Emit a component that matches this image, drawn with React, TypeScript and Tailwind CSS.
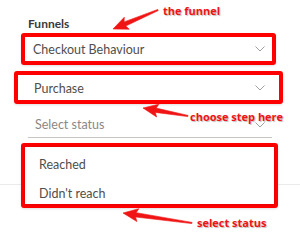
import React from 'react';

type Pt = [number, number];

// tapered annotation arrow: thin at the tail, arrowhead at the tip
function arrowPoints(tail: Pt, tip: Pt, head = 13, wing = 6.5, shaft = 2.2) {
  const dx = tip[0] - tail[0];
  const dy = tip[1] - tail[1];
  const len = Math.hypot(dx, dy);
  const ux = dx / len;
  const uy = dy / len;
  const nx = -uy;
  const ny = ux;
  const bx = tip[0] - ux * head;
  const by = tip[1] - uy * head;
  const pts: Pt[] = [
    [tail[0] + nx * 0.6, tail[1] + ny * 0.6],
    [bx + nx * shaft, by + ny * shaft],
    [bx - ux * 2 + nx * wing, by - uy * 2 + ny * wing],
    tip,
    [bx - ux * 2 - nx * wing, by - uy * 2 - ny * wing],
    [bx - nx * shaft, by - ny * shaft],
    [tail[0] - nx * 0.6, tail[1] - ny * 0.6],
  ];
  return pts.map((p) => `${p[0].toFixed(1)},${p[1].toFixed(1)}`).join(' ');
}

function Chevron() {
  return (
    <svg width="10" height="6" viewBox="0 0 10 6" className="shrink-0">
      <path d="M0.5 0.5L5 5L9.5 0.5" fill="none" stroke="#a19f9d" strokeWidth="1" />
    </svg>
  );
}

const note =
  "absolute whitespace-nowrap font-['Open_Sans',sans-serif] text-[11px] font-bold leading-[14px] text-[#f01414] [text-shadow:1px_1px_1px_rgba(0,0,0,0.25)]";

export default function App() {
  return (
    <div className="relative h-[232px] w-[300px] overflow-hidden bg-white font-['Lato','Open_Sans',sans-serif]">
      <div className="pt-[16px]">
        <p className="h-[16px] pl-[28px] text-[12px] font-bold leading-[16px] text-[#3b3a39]">
          Funnels
        </p>

        <div className="mt-[1px] ml-[21px] flex h-[32px] w-[255px] items-center justify-between rounded-[3px] border-4 border-[#f00] pl-[8px] pr-[7px] shadow-sm">
          <span className="pt-[3px] text-[12.5px] text-[#504e4c]">Checkout Behaviour</span>
          <Chevron />
        </div>

        <div className="mt-[6px] ml-[14px] flex h-[33px] w-[269px] items-center justify-between rounded-[3px] border-4 border-[#f00] pl-[16px] pr-[14px] shadow-sm">
          <span className="pt-[3px] text-[12.5px] text-[#504e4c]">Purchase</span>
          <Chevron />
        </div>

        <div className="relative mt-[8px]">
          <div className="ml-[28px] flex h-[26px] w-[244px] items-center justify-between border-b border-[#c8c6c4] pl-[7px] pr-[7px]">
            <span className="pt-[2px] text-[12.5px] text-[#8a8886]">Select status</span>
            <Chevron />
          </div>
          <div className="mt-[46px] border-t border-[#edebe9]" />

          <div className="absolute top-[31px] left-[21px] h-[65px] w-[257px] rounded-[3px] border-4 border-[#f00] bg-white shadow-sm">
            <div className="h-full pt-[4px] shadow-[0_0_3px_rgba(0,0,0,0.18)]">
              <div className="flex h-[29px] items-center pl-[14px] text-[12.5px] text-[#504e4c]">Reached</div>
              <div className="flex h-[29px] items-center pl-[14px] text-[12.5px] text-[#504e4c]">Didn't reach</div>
            </div>
          </div>
        </div>
      </div>

      <svg className="pointer-events-none absolute inset-0" width="300" height="232" viewBox="0 0 300 232">
        <g fill="#f01414" stroke="#f01414" strokeWidth="0.6" strokeLinejoin="round">
          <polygon points={arrowPoints([158, 10], [113, 29])} />
          <polygon points={arrowPoints([188, 116], [143, 108])} />
          <polygon points={arrowPoints([192, 223], [123, 213])} />
        </g>
      </svg>

      <span className={`${note} top-[4px] left-[163px]`}>the funnel</span>
      <span className={`${note} top-[110px] left-[190px]`}>choose step here</span>
      <span className={`${note} top-[216px] left-[197px]`}>select status</span>
    </div>
  );
}
